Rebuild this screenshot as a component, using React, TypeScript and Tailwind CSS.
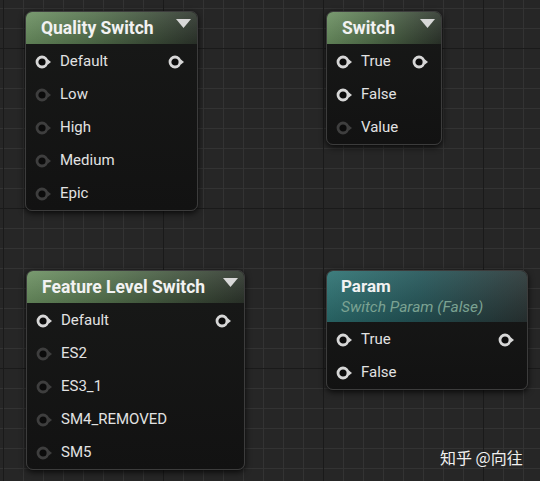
import React from "react";

type Row = { label: string; active: boolean; out?: boolean };

function Pin({ active }: { active: boolean }) {
  const c = active ? "#d6d6d6" : "#3e3e3e";
  return (
    <svg width="17" height="14" viewBox="0 0 17 14" className="shrink-0">
      <circle cx="7" cy="7" r="5" fill="#0b0b0b" stroke={c} strokeWidth="2.8" />
      <polygon points="12.6,4.3 16,7 12.6,9.7" fill={c} />
    </svg>
  );
}

function Grid() {
  return (
    <svg className="absolute inset-0" width="540" height="481">
      <defs>
        <pattern id="minor" x="3" y="8" width="20" height="20" patternUnits="userSpaceOnUse">
          <path d="M0.5 0 V20 M0 0.5 H20" stroke="#333333" strokeWidth="1" fill="none" />
        </pattern>
        <pattern id="major" x="3" y="48" width="160" height="160" patternUnits="userSpaceOnUse">
          <path d="M0.5 0 V160 M0 0.5 H160" stroke="#1a1a1a" strokeWidth="1" fill="none" />
        </pattern>
      </defs>
      <rect width="540" height="481" fill="#262626" />
      <rect width="540" height="481" fill="url(#minor)" />
      <rect width="540" height="481" fill="url(#major)" />
    </svg>
  );
}

function Node({
  pos,
  title,
  subtitle,
  teal,
  rows,
}: {
  pos: string;
  title: string;
  subtitle?: string;
  teal?: boolean;
  rows: Row[];
}) {
  return (
    <div
      className={`absolute ${pos} rounded-[7px] border border-[#3c3c3c] bg-[linear-gradient(180deg,#181918,#121212)] shadow-[0_2px_6px_rgba(0,0,0,0.8)] overflow-hidden`}
    >
      {teal ? (
        <div className="h-[51px] pl-[14px] pt-[4px] bg-[linear-gradient(100deg,#2e7373_0%,#245659_45%,#2a3434_100%)] relative">
          <div className="absolute inset-0 bg-[linear-gradient(180deg,rgba(255,255,255,0.08),rgba(0,0,0,0.15))]" />
          <div className="relative text-[17px] font-bold text-[#f2f2f2] leading-[22px]">{title}</div>
          <div className="relative text-[15.5px] italic text-[#7ba292] leading-[20px]">{subtitle}</div>
        </div>
      ) : (
        <div className="h-[32px] pl-[15px] pr-[6px] flex items-center justify-between bg-[linear-gradient(90deg,#6a8f60_0%,#526f4b_40%,#2c342b_100%)] relative">
          <div className="absolute inset-0 bg-[linear-gradient(180deg,rgba(255,255,255,0.10),rgba(0,0,0,0.12))]" />
          <span className="relative text-[17.5px] font-bold text-[#f2f2f2]">{title}</span>
          <svg width="15" height="10" viewBox="0 0 15 10" className="relative -mt-[8px]">
            <polygon points="0,0 15,0 7.5,9" fill="#d8d8d8" />
          </svg>
        </div>
      )}
      <div className="flex flex-col pt-[1px]">
        {rows.map((r) => (
          <div key={r.label} className="h-[33px] pl-[9px] pr-[12px] flex items-center justify-between">
            <div className="flex items-center gap-[8px]">
              <Pin active={r.active} />
              <span className="text-[15px] text-[#e2e2e2]">{r.label}</span>
            </div>
            {r.out && <Pin active />}
          </div>
        ))}
      </div>
    </div>
  );
}

export default function App() {
  return (
    <div
      className="relative w-[540px] h-[481px] overflow-hidden bg-[#262626]"
      style={{ fontFamily: "Roboto, 'Noto Sans', sans-serif" }}
    >
      <Grid />
      <Node
        pos="left-[25px] top-[11px] w-[173px]"
        title="Quality Switch"
        rows={[
          { label: "Default", active: true, out: true },
          { label: "Low", active: false },
          { label: "High", active: false },
          { label: "Medium", active: false },
          { label: "Epic", active: false },
        ]}
      />
      <Node
        pos="left-[326px] top-[11px] w-[116px]"
        title="Switch"
        rows={[
          { label: "True", active: true, out: true },
          { label: "False", active: true },
          { label: "Value", active: false },
        ]}
      />
      <Node
        pos="left-[26px] top-[270px] w-[219px]"
        title="Feature Level Switch"
        rows={[
          { label: "Default", active: true, out: true },
          { label: "ES2", active: false },
          { label: "ES3_1", active: false },
          { label: "SM4_REMOVED", active: false },
          { label: "SM5", active: false },
        ]}
      />
      <Node
        pos="left-[326px] top-[270px] w-[202px]"
        title="Param"
        subtitle="Switch Param (False)"
        teal
        rows={[
          { label: "True", active: true, out: true },
          { label: "False", active: true },
        ]}
      />
      <div
        className="absolute left-[440px] top-[445px] text-[16px] text-[#f0f0f0]"
        style={{ fontFamily: "'Noto Sans CJK SC', 'Noto Sans', sans-serif" }}
      >
        知乎 @向往
      </div>
    </div>
  );
}
